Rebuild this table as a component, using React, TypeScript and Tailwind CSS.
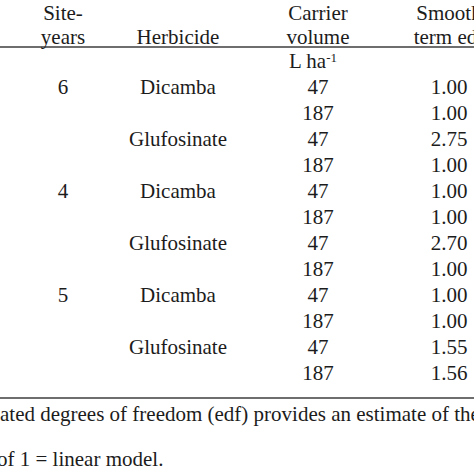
const rows: [string, string, string, string][] = [
  ["6", "Dicamba", "47", "1.00"],
  ["", "", "187", "1.00"],
  ["", "Glufosinate", "47", "2.75"],
  ["", "", "187", "1.00"],
  ["4", "Dicamba", "47", "1.00"],
  ["", "", "187", "1.00"],
  ["", "Glufosinate", "47", "2.70"],
  ["", "", "187", "1.00"],
  ["5", "Dicamba", "47", "1.00"],
  ["", "", "187", "1.00"],
  ["", "Glufosinate", "47", "1.55"],
  ["", "", "187", "1.56"],
];

const cols = "grid grid-cols-[126px_104px_176px_86px]";
const cell = "flex justify-center whitespace-nowrap";

export default function App() {
  return (
    <div className="h-[474px] w-[474px] overflow-hidden bg-white font-['Liberation_Serif',serif] text-[21px] text-[#1c1c1c]">
      <div className="w-[492px]">
        <div className={`${cols} h-[48px] border-b-2 border-[#6e6e6e] pt-[1px] leading-[24px]`}>
          <div className="text-center">
            Site-
            <br />
            years
          </div>
          <div className={`${cell} self-end`}>Herbicide</div>
          <div className="text-center">
            Carrier
            <br />
            volume
          </div>
          <div className="text-center whitespace-nowrap">
            Smooth
            <br />
            term edf
          </div>
        </div>
        <div className="border-b-2 border-[#6e6e6e] pb-[11px] leading-[26px]">
          <div className={cols}>
            <div />
            <div />
            <div className={`${cell} pr-[10px]`}>
              <span>
                L ha<sup className="text-[13px]">-1</sup>
              </span>
            </div>
            <div />
          </div>
          {rows.map((r, i) => (
            <div key={i} className={cols}>
              <div className={cell}>{r[0]}</div>
              <div className={cell}>{r[1]}</div>
              <div className={cell}>{r[2]}</div>
              <div className={cell}>{r[3]}</div>
            </div>
          ))}
        </div>
        <div className="whitespace-nowrap pt-[2px] leading-[26px]">
          <p>ated degrees of freedom (edf) provides an estimate of the degree of non-linearity</p>
          <p className="mt-[19px] -ml-[3px]">of 1 = linear model.</p>
        </div>
      </div>
    </div>
  );
}
